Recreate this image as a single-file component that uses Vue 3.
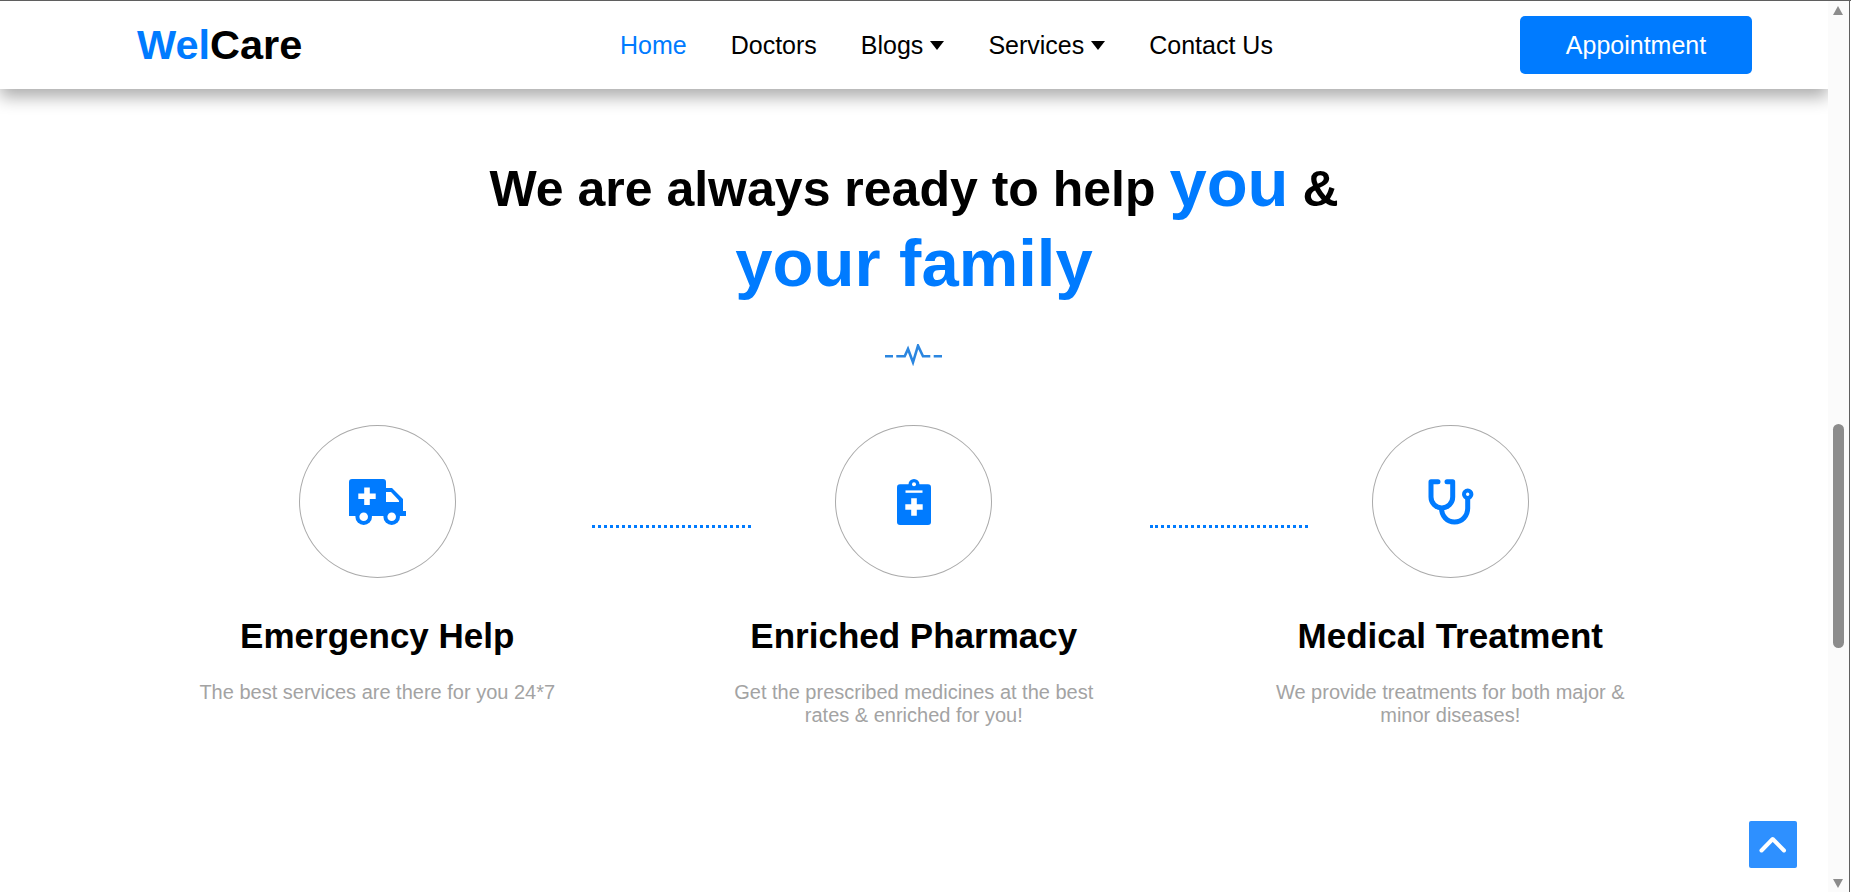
<template>
  <div class="window">
    <div class="page">
      <header class="topbar">
        <div class="logo"><span class="blue">Wel</span>Care</div>
        <nav class="nav">
          <a v-for="link in links" :key="link.label" class="nav-link" :class="{ active: link.active }">
            {{ link.label }}<span v-if="link.caret" class="caret"></span>
          </a>
        </nav>
        <button class="appointment">Appointment</button>
      </header>

      <section class="help">
        <h1 class="heading">
          We are always ready to help <span class="blue big">you</span> &amp;<br />
          <span class="blue big">your family</span>
        </h1>
        <svg class="pulse" width="58" height="22" viewBox="0 0 58 22" fill="none">
          <path d="M0 12.3H8M11.3 12.3H19.7L23 5L28 18.3L33 1.7L38 12.3H45.3M48.7 12.3H57" stroke="#2b86e0" stroke-width="2.6" />
        </svg>

        <div class="circles">
          <div class="circle">
            <svg width="57" height="46" viewBox="0 0 57 46">
              <path fill="#007bff" d="M3 0H34A3 3 0 0 1 37 3V9H43L54 20V32H57V37H0V3A3 3 0 0 1 3 0Z" />
              <circle cx="14.7" cy="37.7" r="8.3" fill="#007bff" />
              <circle cx="42.7" cy="37.7" r="8.3" fill="#007bff" />
              <circle cx="14.7" cy="37.7" r="4.3" fill="#fff" />
              <circle cx="42.7" cy="37.7" r="4.3" fill="#fff" />
              <path fill="#fff" d="M15.2 8.6H20.8V14.5H26.7V20.1H20.8V26H15.2V20.1H9.3V14.5H15.2Z" />
              <path fill="#fff" d="M37 13H42L50 21.5V23H37Z" />
            </svg>
          </div>
          <div class="connector first"></div>
          <div class="circle">
            <svg width="34" height="46" viewBox="0 0 34 46">
              <rect y="5.3" width="34" height="40.7" rx="3" fill="#007bff" />
              <circle cx="17" cy="5.5" r="5.5" fill="#007bff" />
              <circle cx="17" cy="5.2" r="2" fill="#fff" />
              <rect x="8.5" y="11.4" width="17" height="2.4" fill="#fff" />
              <path fill="#fff" d="M14.2 19.3H19.8V25.2H25.7V30.8H19.8V36.7H14.2V30.8H8.3V25.2H14.2Z" />
            </svg>
          </div>
          <div class="connector second"></div>
          <div class="circle">
            <svg width="46" height="46" viewBox="0 0 46 46" fill="none">
              <path d="M10 2.7H3V18A10.85 11 0 0 0 24.7 18V2.7H19" stroke="#007bff" stroke-width="5" stroke-linecap="round" stroke-linejoin="round" />
              <path d="M13.5 29C13.5 37 19 43 26.5 43C34 43 39.7 37 39.7 29V20" stroke="#007bff" stroke-width="5" />
              <circle cx="39.7" cy="15.3" r="3.7" fill="#fff" stroke="#007bff" stroke-width="4" />
            </svg>
          </div>
        </div>

        <div class="cards">
          <div v-for="card in cards" :key="card.title" class="card">
            <h2 class="card-title">{{ card.title }}</h2>
            <p class="card-text">{{ card.text }}</p>
          </div>
        </div>
      </section>

      <button class="to-top">
        <svg width="48" height="47" viewBox="0 0 48 47" fill="none">
          <path d="M12.5 29.5L23.7 18L35 29.5" stroke="#fff" stroke-width="4" stroke-linecap="round" stroke-linejoin="round" />
        </svg>
      </button>
    </div>

    <aside class="scrollbar">
      <span class="arrow up"></span>
      <span class="thumb"></span>
      <span class="arrow down"></span>
    </aside>
  </div>
</template>

<script setup>
const links = [
  { label: 'Home', active: true },
  { label: 'Doctors' },
  { label: 'Blogs', caret: true },
  { label: 'Services', caret: true },
  { label: 'Contact Us' },
];

const cards = [
  { title: 'Emergency Help', text: 'The best services are there for you 24*7' },
  { title: 'Enriched Pharmacy', text: 'Get the prescribed medicines at the best rates & enriched for you!' },
  { title: 'Medical Treatment', text: 'We provide treatments for both major & minor diseases!' },
];
</script>

<style>
html,
body {
  margin: 0;
  overflow: hidden;
  background: #fff;
}
</style>

<style scoped>
.window {
  display: flex;
  width: 1851px;
  height: 892px;
  overflow: hidden;
  box-sizing: border-box;
  border-top: 1px solid #5f5f5f;
  font-family: 'Liberation Sans', Arial, sans-serif;
  color: #000;
  background: #fff;
}

.page {
  position: relative;
  width: 1828px;
  flex: none;
  overflow: hidden;
}

.topbar {
  display: flex;
  align-items: center;
  height: 88px;
  padding: 0 76px 0 137px;
  background: #fff;
  box-shadow: 0 8px 16px rgba(0, 0, 0, 0.33);
}

.logo {
  font-size: 41.5px;
  font-weight: 700;
  width: 164px;
}

.blue {
  color: #007bff;
}

.nav {
  display: flex;
  gap: 44px;
  margin-left: 319px;
}

.nav-link {
  font-size: 25px;
  color: #000;
}

.nav-link.active {
  color: #007bff;
}

.caret {
  display: inline-block;
  margin-left: 7px;
  vertical-align: 4px;
  border-top: 9px solid #000;
  border-left: 7.5px solid transparent;
  border-right: 7.5px solid transparent;
}

.appointment {
  margin-left: auto;
  width: 232px;
  height: 58px;
  border: none;
  border-radius: 5px;
  background: #007bff;
  color: #fff;
  font: 25px 'Liberation Sans', Arial, sans-serif;
}

.help {
  padding-top: 57px;
}

.heading {
  margin: 0;
  text-align: center;
  font-size: 50px;
  font-weight: 700;
  line-height: 73px;
}

.big {
  font-size: 67px;
}

.pulse {
  display: block;
  margin: 38px 0 0 885px;
}

.circles {
  display: flex;
  align-items: flex-start;
  margin-top: 59px;
  padding-left: 299px;
}

.circle {
  display: flex;
  align-items: center;
  justify-content: center;
  flex: none;
  box-sizing: border-box;
  width: 157px;
  height: 153px;
  border: 1px solid #aaa;
  border-radius: 50%;
}

.connector {
  flex: none;
  height: 0;
  margin-top: 100px;
  border-bottom: 3px dotted #007bff;
}

.connector.first {
  width: 159px;
  margin-left: 136px;
  margin-right: 84px;
}

.connector.second {
  width: 158px;
  margin-left: 158px;
  margin-right: 64px;
}

.cards {
  display: grid;
  grid-template-columns: repeat(3, 536.5px);
  padding-left: 109px;
  margin-top: 37px;
}

.card {
  display: flex;
  flex-direction: column;
  align-items: center;
  text-align: center;
}

.card-title {
  margin: 0;
  font-size: 35px;
  font-weight: 700;
  line-height: 42px;
}

.card-text {
  width: 370px;
  margin: 24px 0 0;
  font-size: 20px;
  line-height: 23px;
  color: #a3a3a3;
}

.to-top {
  position: absolute;
  left: 1749px;
  top: 820px;
  width: 48px;
  height: 47px;
  padding: 0;
  border: none;
  border-radius: 2px;
  background: #2e90ff;
}

.to-top svg {
  display: block;
}

.scrollbar {
  position: relative;
  flex: 1;
  background: #fbfbfb;
  border-right: 1px solid #5f5f5f;
  margin-right: 1px;
}

.thumb {
  position: absolute;
  left: 5px;
  top: 423px;
  width: 11px;
  height: 224px;
  border-radius: 6px;
  background: #8c8c8c;
}

.arrow {
  position: absolute;
  left: 5px;
  border-left: 5.5px solid transparent;
  border-right: 5.5px solid transparent;
}

.arrow.up {
  top: 5px;
  border-bottom: 9px solid #8c8c8c;
}

.arrow.down {
  top: 878px;
  border-top: 9px solid #8c8c8c;
}
</style>
